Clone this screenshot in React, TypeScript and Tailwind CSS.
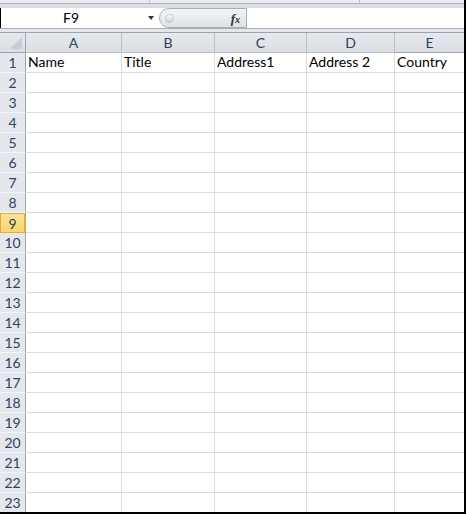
import React from "react";

const cols = [
  { key: "A", w: "w-[96px]" },
  { key: "B", w: "w-[93px]" },
  { key: "C", w: "w-[92px]" },
  { key: "D", w: "w-[88px]" },
  { key: "E", w: "w-[69px]" },
];

const firstRow = ["Name", "Title", "Address1", "Address 2", "Country"];
const rows = Array.from({ length: 23 }, (_, i) => i + 1);

function FormulaBar() {
  return (
    <div className="flex flex-col">
      {/* ribbon edge */}
      <div className="h-[3px] bg-[#e9ebee] flex">
        <div className="w-[150px] border-r border-[#b6bcc4]" />
        <div className="w-[210px] border-r border-[#b6bcc4]" />
      </div>
      <div className="h-px bg-[#aeb5be]" />
      <div className="h-[4px] bg-[#d9dde2]" />

      <div className="h-[20px] flex bg-white border-l border-black">
        {/* name box */}
        <div className="w-[158px] flex items-center relative">
          <span className="w-[140px] text-center text-[14px] leading-none text-black">F9</span>
          <span className="absolute left-[147px] top-[8px] w-0 h-0 border-l-[3.5px] border-r-[3.5px] border-t-[4px] border-l-transparent border-r-transparent border-t-[#333]" />
        </div>
        {/* grip + fx */}
        <div className="w-[88px] flex items-center rounded-l-full border border-[#a9b0b8] bg-gradient-to-b from-[#f3f4f6] to-[#dfe2e6]">
          <span className="ml-[5px] w-[9px] h-[9px] rounded-full bg-gradient-to-b from-[#ffffff] to-[#c9cdd2] border border-[#c3c8ce]" />
          <span className="ml-auto mr-[6px] font-['Liberation_Serif',serif] italic font-bold text-[13px] leading-none text-[#333]">
            f<span className="text-[10px]">x</span>
          </span>
        </div>
        <div className="flex-1" />
      </div>

      <div className="h-px bg-[#a5adb6]" />
      <div className="h-[3px] bg-[#e4e7eb]" />
    </div>
  );
}

export default function App() {
  return (
    <div className="w-[466px] h-[514px] overflow-hidden bg-white border-r-2 border-b-2 border-black font-['Lato','Liberation_Sans',sans-serif]">
      <FormulaBar />

      {/* column headers */}
      <div className="flex h-[21px] border-t border-[#9ba3ad] bg-gradient-to-b from-[#e6e9ed] to-[#dadee3]">
        <div className="w-[26px] h-[20px] border-r border-b border-[#9ba3ad] flex items-end justify-end pr-[3px] pb-[3px]">
          <svg width="12" height="12" viewBox="0 0 12 12">
            <polygon points="12,0 12,12 0,12" fill="#c8cdd3" />
          </svg>
        </div>
        {cols.map((c, i) => (
          <div
            key={c.key}
            className={`${c.w} h-[20px] flex items-center justify-center text-[14px] text-[#2e4360] border-b border-[#9ba3ad] ${i < cols.length - 1 ? "border-r border-[#b8bec6]" : ""}`}
          >
            {c.key}
          </div>
        ))}
      </div>

      {/* rows */}
      {rows.map((n) => {
        const sel = n === 9;
        return (
          <div key={n} className="flex h-[20px]">
            <div
              className={
                sel
                  ? "w-[26px] h-[20px] flex items-center justify-center text-[14px] text-[#3a3a3a] bg-gradient-to-b from-[#fbe39a] to-[#f9d66c] border border-[#e2ae3b] border-r-[2px]"
                  : "w-[26px] h-[20px] flex items-center justify-center text-[14px] text-[#2e4360] bg-[#e4e7eb] border-r border-b border-r-[#9ba3ad] border-b-[#f3f4f6]"
              }
            >
              {n}
            </div>
            {cols.map((c, i) => (
              <div
                key={c.key}
                className={`${c.w} h-[20px] flex items-end pb-[1px] pl-[2px] text-[14px] leading-[18px] text-black border-b border-[#dadcdd] ${i < cols.length - 1 ? "border-r" : ""}`}
              >
                {n === 1 ? firstRow[i] : ""}
              </div>
            ))}
          </div>
        );
      })}
    </div>
  );
}
